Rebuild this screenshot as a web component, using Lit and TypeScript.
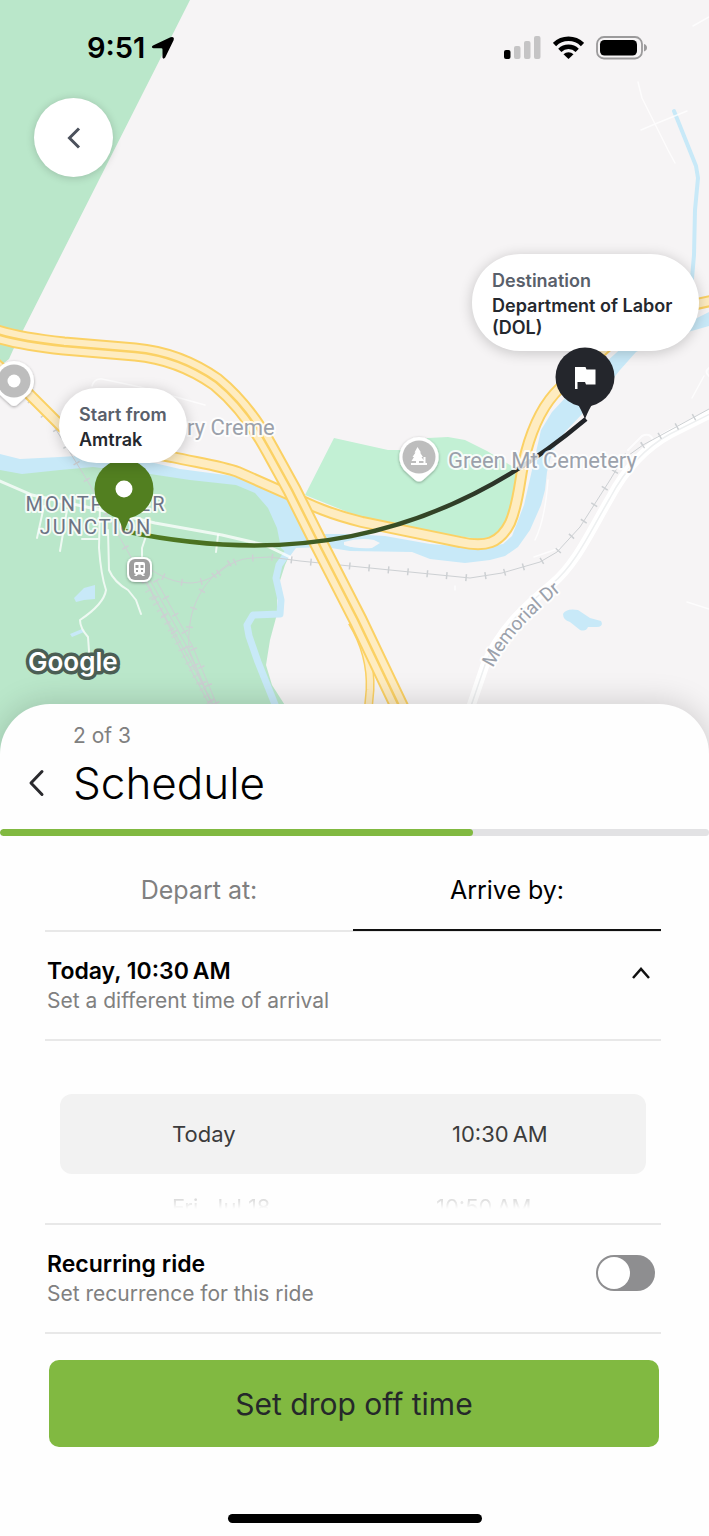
import { LitElement, html, svg, css } from "lit";
import { customElement, property, state } from "lit/decorators.js";
import { classMap } from "lit/directives/class-map.js";

const RIVER =
  "M0 454L20 459L60 457L93 455L150 462L180 469L233 476L252 483L275 492L290 502L306 525L320 534L350 534L385 536L430 544L480 548L503 544L512 536L524 505L532 470L541 430L552 412L580 382L606 362L625 345L697 318L709 312V326L660 340L636 352L620 370L600 395L584 412L565 432L552 452L547 472L545 490L541 505L530 530L518 547L505 556L490 560L465 563L430 559L412 552L350 551L325 547L296 548L290 556L281 548L277 528L268 508L255 493L236 485L190 480L150 474L93 467L60 470L22 474L0 470Z";
const FREEWAY =
  "M-6 333C12 339 36 343 64 346L135 352C168 355 196 368 216 382C238 400 256 424 270 450C280 468 287 481 292 490L317 540L358 620L400 708";
const ROUTE_2 =
  "M-6 362L24 389L62 427C80 440 120 448 172 457C200 463 222 466 238 472L290 495C312 506 330 514 362 522L460 542C486 548 500 543 510 523C520 500 519 478 526 452C533 426 543 404 560 388L612 342C640 322 670 308 716 300";
const RAMP = "M352 622C366 645 371 668 370 690L368 712";
const RAIL_EAST =
  "M252 558L270 557L300 561L350 566L470 578L502 573L540 562L557 552L580 527L610 480L622 460L643 445L709 409";
const RAIL_MAIN = "M30 400L55 428L90 485L124 545L150 590L190 660L216 710";
const RAIL_LOOP = "M146 566C162 578 176 583 192 583C222 580 222 560 252 558";
const RAIL_SPUR = "M230 563C204 580 186 606 189 650L206 690";
const RAIL_YARD = "M156 580L192 645L219 710";
const MEMORIAL =
  "M469 712L485 665C500 628 528 604 552 584C576 564 590 532 610 498C628 464 648 446 670 434L716 411";

@customElement("ride-map")
export class RideMap extends LitElement {
  static styles = css`
    :host {
      display: block;
      position: relative;
      height: 760px;
      overflow: hidden;
      background: #f6f4f5;
    }
    .canvas {
      display: block;
      width: 100%;
      height: 100%;
    }
    .yellow { fill: none; stroke: #fbd164; }
    .cream { fill: none; stroke: #feecc1; }
    .white { fill: none; stroke: #fff; stroke-linecap: round; stroke-linejoin: round; }
    .soft { opacity: 0.75; }
    .water { fill: #c8e9f8; }
    .stream { fill: none; stroke: #c8e9f8; stroke-linejoin: round; stroke-linecap: round; }
    .rail { fill: none; stroke: #cdd0d3; stroke-width: 1; }
    .ties { fill: none; stroke: #cdd0d3; stroke-width: 7; stroke-dasharray: 1.5 18; }
    .label {
      font-family: Roboto, sans-serif;
      fill: #9ba1ab;
      stroke: #fff;
      stroke-width: 4px;
      stroke-opacity: 0.85;
      stroke-linejoin: round;
      paint-order: stroke;
      font-size: 22px;
    }
    .town {
      font-size: 20px;
      letter-spacing: 2px;
      fill: #6d7485;
      text-anchor: middle;
    }
    .street { font-size: 19px; }
    .brand {
      font-family: Inter, sans-serif;
      font-weight: 600;
      font-size: 26px;
      fill: #fff;
      stroke: #4b5e54;
      stroke-width: 7px;
      stroke-linejoin: round;
      paint-order: stroke;
    }
    .callout {
      position: absolute;
      box-sizing: border-box;
      background: #fff;
      border-radius: 48px;
      padding: 16px 20px 12px;
      box-shadow: 0 2px 14px rgba(0, 0, 0, 0.2);
      font: 600 18px/22px Inter, sans-serif;
      color: #25282e;
    }
    .caption {
      display: block;
      color: #59606b;
      margin-bottom: 3px;
    }
    .start { left: 59px; top: 388px; white-space: nowrap; }
    .end { left: 472px; top: 254px; width: 227px; }
  `;

  render() {
    return html`
      <svg class="canvas" viewBox="0 0 709 760" preserveAspectRatio="xMinYMin slice" role="img" aria-label="Route map">
        <defs>
          <linearGradient id="trip" x1="124" x2="586" y1="0" y2="0" gradientUnits="userSpaceOnUse">
            <stop offset="0" stop-color="#527f20"></stop>
            <stop offset="0.5" stop-color="#3b5524"></stop>
            <stop offset="0.85" stop-color="#2a302a"></stop>
            <stop offset="1" stop-color="#202228"></stop>
          </linearGradient>
          <filter id="drop" x="-30%" y="-30%" width="160%" height="160%">
            <feDropShadow dx="0" dy="1" stdDeviation="1.5" flood-opacity="0.35"></feDropShadow>
          </filter>
        </defs>
        <path fill="#bae7ca" d="M0 0H190L13 350L9 359L0 366Z"></path>
        <path fill="#bae7ca" d="M0 462L60 460L93 460L180 475L250 486L275 505L292 550L285 565L277 590L277 614L270 640L266 665L272 685L288 710V760H0Z"></path>
        <path fill="#c2f0d4" d="M334 438L388 450L400 450L428 438L448 437L465 440L487 451L515 468L522 475L518 497L505 528L492 537L478 539L430 532L360 517L305 495Z"></path>
        <path class="water" d=${RIVER}></path>
        <path class="stream" stroke-width="7" d="M291 548L279 565L276 578L281 600L280 614L253 615L247 625L249 636L258 662L278 712"></path>
        <path class="stream" stroke-width="4" d="M674 111L696 166L698 178L695 210L694 255L691 290"></path>
        <path class="water" d="M563 614Q566 608 578 610L590 618L601 621Q604 626 597 627L588 627Q586 632 580 630L570 622Q563 620 563 614ZM74 598L84 588L95 585V599L84 600L76 602ZM70 634L82 629L84 632L72 637Z"></path>
        <path fill="#f6f4f5" d="M344 542Q360 537 374 540L380 543L372 548Q356 549 344 545Z"></path>
        <path class="white soft" stroke-width="1.5" d="M638 82L642 98L655 124L668 150L675 163M641 130L655 124L687 111M693 26L709 17M92 386Q94 378 102 379L140 387L205 405M692 398L704 376M687 602L709 609M455 586V590M534 557L560 548M535 540Q545 520 548 480"></path>
        <path class="white soft" stroke-width="3" d="M0 481L32 495L100 510L155 523L222 535L265 545L292 558"></path>
        <path class="white soft" stroke-width="2" d="M44 506L37 538M67 510L60 551M100 505L99 548Q101 575 106 590Q104 604 80 620Q80 628 88 637L90 665M108 530L109 570Q114 582 128 590L136 600L141 614M82 539H98M146 536L142 548V560M218 535L216 552"></path>
        <path class="white" stroke-width="9" d=${MEMORIAL}></path>
        <path fill="none" stroke="#eef0f1" stroke-width="1.5" d=${MEMORIAL}></path>
        <path class="white soft" stroke-width="2" d="M628 450L642 436Q650 432 653 440M709 368Q704 372 709 376"></path>
        ${[RAIL_EAST, RAIL_MAIN, RAIL_LOOP, RAIL_SPUR, RAIL_YARD].map(
          (d) => svg`<path class="rail" d=${d}></path><path class="ties" d=${d}></path>`
        )}
        <path class="rail" d="M146 580L170 628L190 668L212 710M150 580L186 645L214 710"></path>
        <path fill="none" stroke="#cdd0d3" stroke-opacity="0.7" stroke-width="7" stroke-dasharray="1.5 6" d="M148 590L166 620L190 665L214 710"></path>
        <path class="yellow" stroke-width="9" d=${RAMP}></path>
        <path class="cream" stroke-width="6" d=${RAMP}></path>
        <path class="yellow" stroke-width="12" d=${ROUTE_2}></path>
        <path class="cream" stroke-width="8" d=${ROUTE_2}></path>
        <path class="yellow" stroke-width="19" d=${FREEWAY}></path>
        <path class="cream" stroke-width="15" d=${FREEWAY}></path>
        <path class="yellow" stroke-width="2.5" d=${FREEWAY}></path>
        <path fill="none" stroke="url(#trip)" stroke-width="4.5" d="M124 531C270 562 430 551 586 419"></path>
        <text class="label" x="187" y="435">ry Creme</text>
        <text class="label" x="448" y="468">Green Mt Cemetery</text>
        <path id="memorial-label" fill="none" d="M493 668Q512 628 572 582"></path>
        <text class="label street"><textPath href="#memorial-label">Memorial Dr</textPath></text>
        <text class="label town" x="96" y="511">MONTPELIER</text>
        <text class="label town" x="96" y="534">JUNCTION</text>
        <g filter="url(#drop)">
          <path fill="#fff" d="M14 361A20 20 0 0 1 30 393L18 404Q14 408 10 404L-2 393A20 20 0 0 1 14 361Z"></path>
          <path fill="#fff" d="M419 437A20 20 0 0 1 434 470L423 480Q419 483 415 480L404 470A20 20 0 0 1 419 437Z"></path>
          <rect x="127" y="557" width="25" height="25" rx="8" fill="#fff"></rect>
        </g>
        <circle cx="14" cy="381" r="16.5" fill="#bdbdbd"></circle>
        <circle cx="14" cy="381" r="6.5" fill="#fff"></circle>
        <circle cx="419" cy="457" r="16.5" fill="#bdbdbd"></circle>
        <path fill="#fff" d="M417.500 447L421 452.500H420L423 457H421.500L424 461H419V463H423.500V457H425.500V463H427V465H411V463H416V461H411.500L414 457H412.500L415.500 452.500H414.500Z"></path>
        <rect x="129" y="559" width="21" height="21" rx="6" fill="#9e9e9e"></rect>
        <path fill="#fff" fill-rule="evenodd" d="M136 562H143Q145 562 145 564V572Q145 574 143 574L145 576H142.500L141 574.500H138L136.500 576H134L136 574Q134 574 134 572V564Q134 562 136 562ZM135.500 565V568H138.500V565ZM140.500 565V568H143.500V565ZM136 570V572H138V570ZM141 570V572H143V570Z"></path>
        <text class="brand" x="28" y="671">Google</text>
        <circle cx="124" cy="489" r="29.500" fill="#527f20"></circle>
        <path fill="#527f20" d="M116 514H132Q128 521 124 532Q120 521 116 514Z"></path>
        <circle cx="124" cy="489" r="8.500" fill="#fff"></circle>
      </svg>
      <div class="callout start"><span class="caption">Start from</span>Amtrak</div>
      <div class="callout end"><span class="caption">Destination</span>Department of Labor (DOL)</div>
      <slot></slot>
    `;
  }
}

@customElement("status-bar")
export class StatusBar extends LitElement {
  static styles = css`
    :host {
      display: flex;
      justify-content: space-between;
      align-items: center;
      padding: 30px 61px 0 87px;
      font: 600 29px/36px Inter, sans-serif;
      color: #000;
    }
    .side { display: flex; align-items: center; gap: 6px; }
    .radios { gap: 12px; }
    svg { display: block; }
  `;
  render() {
    return html`
      <div class="side">
        <span>9:51</span>
        <svg width="24" height="24" viewBox="0 0 24 24"><path d="M2 9.500L19.500 1.200Q23.800 0 22.600 4.200L14.200 21.500Q12.400 23.800 11.500 21.500V13.500Q11.500 12.300 10.300 12.300H2.500Q-0.500 11.500 2 9.500Z"></path></svg>
      </div>
      <div class="side radios">
        <svg width="37" height="24" viewBox="0 0 37 24">
          <rect x="0" y="14" width="6.500" height="9" rx="2"></rect>
          <g fill="#c5c4c5">
            <rect x="10" y="10" width="6.500" height="13" rx="2"></rect>
            <rect x="20" y="5" width="6.500" height="18" rx="2"></rect>
            <rect x="30" y="0" width="6.500" height="23" rx="2"></rect>
          </g>
        </svg>
        <svg width="31" height="24" viewBox="0 0 31 24">
          <g fill="none" stroke="#000" stroke-width="4.600">
            <path d="M1.500 8.500A20 20 0 0 1 29.500 8.500"></path>
            <path d="M6.800 14.300A12.500 12.500 0 0 1 24.200 14.300"></path>
          </g>
          <path d="M10.500 18.200A7.500 7.500 0 0 1 20.500 18.200L15.500 23Z"></path>
        </svg>
        <svg width="52" height="24" viewBox="0 0 52 24">
          <rect x="1" y="1" width="45" height="21.500" rx="7" fill="none" stroke="#9b9a9b" stroke-width="1.800"></rect>
          <rect x="4" y="4" width="37" height="15.500" rx="4.500"></rect>
          <path fill="#9b9a9b" d="M48 8Q51 9 51 11.800Q51 14.500 48 15.500Z"></path>
        </svg>
      </div>
    `;
  }
}

@customElement("time-wheel")
export class TimeWheel extends LitElement {
  @property({ attribute: false }) current: string[] = [];
  @property({ attribute: false }) upcoming: string[] = [];

  static styles = css`
    :host {
      display: block;
      padding: 53px 15px 14px;
      font: 400 22px/28px Inter, sans-serif;
    }
    .row {
      display: grid;
      grid-template-columns: 1fr 210px;
      padding-left: 112px;
    }
    .current {
      align-items: center;
      height: 80px;
      background: #f2f2f2;
      border-radius: 12px;
      color: #3c3c3c;
    }
    .current .time { padding-left: 16px; }
    .next {
      height: 16px;
      padding-top: 19px;
      overflow: hidden;
      color: #d2d2d2;
      -webkit-mask-image: linear-gradient(#000 65%, transparent);
      mask-image: linear-gradient(#000 65%, transparent);
    }
  `;
  render() {
    return html`
      <div role="listbox" aria-label="Arrival time">
        <div class="row current" role="option" aria-selected="true">
          <span>${this.current[0]}</span><span class="time">${this.current[1]}</span>
        </div>
        <div class="row next" role="option" aria-selected="false">
          <span>${this.upcoming[0]}</span><span>${this.upcoming[1]}</span>
        </div>
      </div>
    `;
  }
}

@customElement("app-root")
export class AppRoot extends LitElement {
  @state() private mode = "arrive";
  @state() private open = true;

  static styles = css`
    :host {
      display: flex;
      flex-direction: column;
      min-height: 100vh;
      background: #fefefe;
      font-family: Inter, sans-serif;
      color: #000;
    }
    button {
      font: inherit;
      color: inherit;
      background: none;
      border: 0;
      padding: 0;
      cursor: pointer;
    }
    svg { display: block; }
    .overlay { position: absolute; inset: 0; }
    .round {
      display: grid;
      place-items: center;
      width: 79px;
      height: 79px;
      margin: 32px 34px;
      border-radius: 50%;
      background: #fff;
      box-shadow: 0 1px 8px rgba(0, 0, 0, 0.18);
    }
    .pin { position: absolute; left: 555px; top: 347px; }
    .sheet {
      position: relative;
      flex: 1;
      display: flex;
      flex-direction: column;
      margin-top: -56px;
      border-radius: 50px 50px 0 0;
      background: #fefefe;
      box-shadow: 0 0 32px rgba(0, 0, 0, 0.18);
    }
    .header {
      display: grid;
      grid-template-columns: 45px 1fr;
      align-items: center;
      padding: 18px 28px 13px;
    }
    .step {
      grid-column: 2;
      font-size: 21px;
      line-height: 28px;
      color: #808080;
    }
    .title {
      margin: 0;
      font-size: 44px;
      line-height: 66px;
      font-weight: 300;
    }
    .progress {
      height: 7px;
      border-radius: 4px;
      background: #e2e2e4;
      overflow: hidden;
    }
    .bar { height: 100%; border-radius: 4px; background: #81b941; }
    .body { padding: 0 48px 0 45px; }
    .tabs {
      display: grid;
      grid-template-columns: 1fr 1fr;
      border-bottom: 2px solid #e8e8e8;
      margin-top: 15px;
    }
    .tab {
      height: 80px;
      font-size: 25px;
      color: #808080;
      border-bottom: 2px solid transparent;
      margin-bottom: -1px;
    }
    .active { color: #000; border-bottom-color: #111; }
    .row {
      display: flex;
      justify-content: space-between;
      align-items: flex-start;
      box-sizing: border-box;
      width: 100%;
      min-height: 109px;
      padding: 24px 6px 0 2px;
      text-align: left;
      border-bottom: 2px solid #e8e8e8;
    }
    .name {
      display: block;
      font-size: 23px;
      line-height: 30px;
      font-weight: 600;
    }
    .hint {
      display: block;
      font-size: 21px;
      line-height: 30px;
      color: #808080;
    }
    .chevron { margin: 10px 5px 0 0; }
    .wheel { border-bottom: 2px solid #e8e8e8; }
    .switch {
      appearance: none;
      display: flex;
      box-sizing: border-box;
      width: 59px;
      height: 36px;
      margin: 6px 0 0;
      padding: 2px;
      border-radius: 18px;
      background: #8e8e90;
      cursor: pointer;
    }
    .switch::before {
      content: "";
      width: 32px;
      height: 32px;
      border-radius: 50%;
      background: #fff;
    }
    .switch:checked { background: #81b941; justify-content: flex-end; }
    .submit {
      height: 87px;
      margin: 26px 50px 0 49px;
      border-radius: 10px;
      background: #81b941;
      color: #25282a;
      font-size: 30px;
    }
    .home {
      width: 254px;
      height: 9px;
      margin: auto auto 13px;
      border-radius: 5px;
      background: #000;
    }
  `;

  private tab(id: string, text: string) {
    const on = this.mode === id;
    return html`<button
      class=${classMap({ tab: true, active: on })}
      role="tab"
      aria-selected=${on ? "true" : "false"}
      @click=${() => (this.mode = id)}
    >${text}</button>`;
  }

  render() {
    return html`
      <ride-map>
        <div class="overlay">
          <status-bar></status-bar>
          <button class="round" aria-label="Back">
            <svg width="14" height="22" viewBox="0 0 14 22" fill="none" stroke="#4b515c" stroke-width="3"><path d="M12 1.500L2.500 11L12 20.500"></path></svg>
          </button>
          <svg class="pin" width="60" height="72" viewBox="0 0 60 72">
            <circle cx="30" cy="30" r="29.500" fill="#24262c"></circle>
            <path fill="#24262c" d="M22 56H38Q34 62 30 72Q26 62 22 56Z"></path>
            <path fill="#fff" d="M20 20H30.500L31.500 22.500H40.500V37.500H31L30 35H22.500V42H20Z"></path>
          </svg>
        </div>
      </ride-map>
      <main class="sheet">
        <header class="header">
          <span class="step">2 of 3</span>
          <button aria-label="Previous step">
            <svg width="18" height="28" viewBox="0 0 18 28" fill="none" stroke="#2a2a2e" stroke-width="3" stroke-linecap="round" stroke-linejoin="round"><path d="M14 2.500L3 14L14 25.500"></path></svg>
          </button>
          <h1 class="title">Schedule</h1>
        </header>
        <div class="progress" role="progressbar" aria-valuenow="2" aria-valuemax="3" aria-label="Progress">
          <div class="bar" style="width:${(2 / 3) * 100}%"></div>
        </div>
        <div class="body">
          <div class="tabs" role="tablist">
            ${this.tab("depart", "Depart at:")}${this.tab("arrive", "Arrive by:")}
          </div>
          <button class="row" aria-expanded=${this.open ? "true" : "false"} @click=${() => (this.open = !this.open)}>
            <span><span class="name">Today, 10:30\u2009AM</span><span class="hint">Set a different time of arrival</span></span>
            <svg class="chevron" width="18" height="14" viewBox="0 0 18 14" fill="none" stroke="#111" stroke-width="2.500"><path d="M1 12L9 3L17 12"></path></svg>
          </button>
          ${this.open
            ? html`<time-wheel class="wheel" .current=${["Today", "10:30\u2009AM"]} .upcoming=${["Fri, Jul 18", "10:50\u2009AM"]}></time-wheel>`
            : null}
          <label class="row" for="recurring">
            <span><span class="name">Recurring ride</span><span class="hint">Set recurrence for this ride</span></span>
            <input class="switch" id="recurring" type="checkbox" role="switch" />
          </label>
        </div>
        <button class="submit">Set drop off time</button>
        <div class="home"></div>
      </main>
    `;
  }
}
